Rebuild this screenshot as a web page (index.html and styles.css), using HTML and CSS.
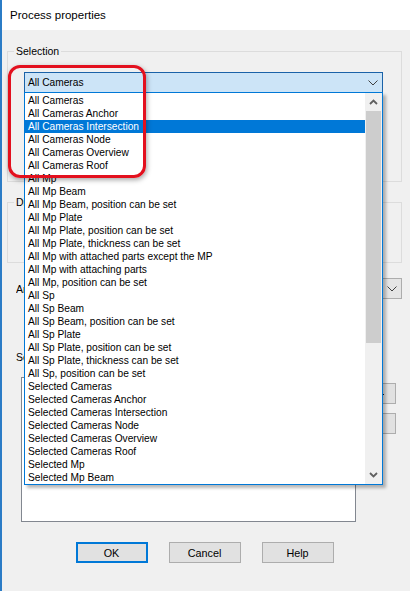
FILE: index.html
```html
<!DOCTYPE html>
<html lang="en">
<head>
    <meta charset="UTF-8">
    <meta name="viewport" content="width=device-width, initial-scale=1.0">
    <title>Process properties</title>
    <link rel="stylesheet" href="styles.css">
</head>
<body>
    <div class="window">
        <div class="titlebar">Process properties</div>

        <div class="content">
            <div class="group group-selection">
                <span class="group-label">Selection</span>
                <div class="combo combo-open">
                    <span>All Cameras</span>
                    <svg class="chevron" width="10" height="6" viewBox="0 0 10 6"><polyline points="0.5,0.5 5,5 9.5,0.5" fill="none" stroke="#404040" stroke-width="1"/></svg>
                </div>
            </div>

            <div class="group group-display">
                <span class="group-label clipped-group">Display</span>
            </div>

            <div class="row row-area">
                <span class="label clipped">Area</span>
                <div class="combo combo-grey">
                    <svg class="chevron" width="10" height="6" viewBox="0 0 10 6"><polyline points="0.5,0.5 5,5 9.5,0.5" fill="none" stroke="#404040" stroke-width="1"/></svg>
                </div>
            </div>

            <div class="label label-selected clipped">Selected objects</div>
            <div class="row row-objects">
                <div class="listbox"></div>
                <div class="side-buttons">
                    <button class="side-button"><span class="dash"></span></button>
                    <button class="side-button"></button>
                </div>
            </div>

            <div class="dialog-buttons">
                <button class="btn btn-default">OK</button>
                <button class="btn">Cancel</button>
                <button class="btn">Help</button>
            </div>
        </div>

        <!-- open dropdown of the selection combo -->
        <div class="dropdown">
            <ul class="items">
                <li>All Cameras</li>
                <li>All Cameras Anchor</li>
                <li class="selected">All Cameras Intersection</li>
                <li>All Cameras Node</li>
                <li>All Cameras Overview</li>
                <li>All Cameras Roof</li>
                <li>All Mp</li>
                <li>All Mp Beam</li>
                <li>All Mp Beam, position can be set</li>
                <li>All Mp Plate</li>
                <li>All Mp Plate, position can be set</li>
                <li>All Mp Plate, thickness can be set</li>
                <li>All Mp with attached parts except the MP</li>
                <li>All Mp with attaching parts</li>
                <li>All Mp, position can be set</li>
                <li>All Sp</li>
                <li>All Sp Beam</li>
                <li>All Sp Beam, position can be set</li>
                <li>All Sp Plate</li>
                <li>All Sp Plate, position can be set</li>
                <li>All Sp Plate, thickness can be set</li>
                <li>All Sp, position can be set</li>
                <li>Selected Cameras</li>
                <li>Selected Cameras Anchor</li>
                <li>Selected Cameras Intersection</li>
                <li>Selected Cameras Node</li>
                <li>Selected Cameras Overview</li>
                <li>Selected Cameras Roof</li>
                <li>Selected Mp</li>
                <li>Selected Mp Beam</li>
            </ul>
            <div class="scrollbar">
                <div class="scroll-arrow">
                    <svg width="9" height="6" viewBox="0 0 9 6"><polyline points="1,5 4.5,1.5 8,5" fill="none" stroke="#606060" stroke-width="1.8"/></svg>
                </div>
                <div class="scroll-thumb"></div>
                <div class="scroll-track"></div>
                <div class="scroll-arrow">
                    <svg width="9" height="6" viewBox="0 0 9 6"><polyline points="1,1 4.5,4.5 8,1" fill="none" stroke="#606060" stroke-width="1.8"/></svg>
                </div>
            </div>
        </div>

        <!-- red marker drawn on the screenshot -->
        <div class="marker"></div>
    </div>
</body>
</html>
```

FILE: styles.css
```css
body {
    margin: 0;
    font-family: "Liberation Sans", Arial, sans-serif;
    color: #000;
}
.window {
    position: relative;
    width: 410px;
    height: 591px;
    box-sizing: border-box;
    border-left: 2px solid #2b7cc6;
    background-color: #f0f0f0;
    overflow: hidden;
}
.titlebar {
    height: 30px;
    line-height: 31px;
    padding-left: 8px;
    background-color: #fff;
    font-size: 11.5px;
}
.content {
    padding: 0 8px 0 5px;
}
.group {
    position: relative;
    box-sizing: border-box;
    border: 1px solid #dcdcdc;
}
.group-label {
    position: absolute;
    top: -8px;
    left: 6px;
    padding: 0 2px;
    background-color: #f0f0f0;
    font-size: 10.5px;
    line-height: 14px;
}
/* labels half hidden under the open dropdown */
.clipped-group {
    width: 9px;
    overflow: hidden;
    white-space: nowrap;
}
.clipped {
    width: 8px;
    overflow: hidden;
    white-space: nowrap;
}
.group-selection {
    margin-top: 21px;
    height: 131px;
    padding: 20px 18px 0 16px;
}
.group-display {
    margin-top: 20px;
    height: 61px;
}
.combo {
    box-sizing: border-box;
    height: 21px;
    display: flex;
    align-items: center;
    justify-content: space-between;
    font-size: 10.2px;
}
.combo-open {
    border: 1px solid #1a62a8;
    background-color: #cce4f7;
    padding: 0 4px 0 3px;
}
.combo-grey {
    width: 60px;
    border: 1px solid #adadad;
    background-color: #e5e5e5;
    justify-content: flex-end;
    padding-right: 4px;
}
.chevron {
    display: block;
}
.row {
    display: flex;
}
.row-area {
    margin-top: 15px;
    align-items: center;
}
.label {
    font-size: 10.5px;
    line-height: 14px;
    margin-left: 9px;
}
.row-area .combo {
    margin-left: auto;
}
.label-selected {
    margin-top: 51px;
}
.row-objects {
    margin-top: 13px;
}
.listbox {
    box-sizing: border-box;
    width: 339px;
    height: 145px;
    margin-left: 14px;
    border: 1px solid #828790;
    background-color: #fff;
}
.side-buttons {
    margin-left: auto;
    margin-right: 6px;
    padding-top: 6px;
    display: flex;
    flex-direction: column;
    gap: 9px;
}
.side-button {
    position: relative;
    box-sizing: border-box;
    width: 40px;
    height: 21px;
    padding: 0;
    border: 1px solid #adadad;
    background-color: #e1e1e1;
}
.dash {
    position: absolute;
    left: 24px;
    top: 10px;
    width: 3px;
    height: 1px;
    background-color: #202020;
}
.dialog-buttons {
    margin-top: 20px;
    display: flex;
    justify-content: center;
    gap: 21px;
}
.btn {
    box-sizing: border-box;
    width: 72px;
    height: 21px;
    padding: 0;
    border: 1px solid #adadad;
    background-color: #e1e1e1;
    font-family: "Liberation Sans", Arial, sans-serif;
    font-size: 10.8px;
    color: #000;
}
.btn-default {
    border: 2px solid #0078d7;
}
.dropdown {
    position: absolute;
    left: 22px;
    top: 92px;
    width: 359px;
    height: 393px;
    box-sizing: border-box;
    border: 1px solid #0078d7;
    background-color: #fff;
    display: flex;
    box-shadow: 3px 3px 3px rgba(0, 0, 0, 0.28);
}
.items {
    flex: 1;
    margin: 0;
    padding: 1px 0 0 0;
    list-style: none;
    font-size: 10.2px;
    line-height: 13px;
}
.items li {
    height: 13px;
    padding-left: 3px;
    white-space: nowrap;
}
.items li.selected {
    background-color: #0078d7;
    color: #fff;
}
.scrollbar {
    width: 17px;
    display: flex;
    flex-direction: column;
    background-color: #f0f0f0;
}
.scroll-arrow {
    height: 18px;
    display: flex;
    align-items: center;
    justify-content: center;
}
.scroll-thumb {
    height: 232px;
    margin: 0 1px;
    background-color: #cdcdcd;
}
.scroll-track {
    flex: 1;
}
.marker {
    position: absolute;
    left: 6px;
    top: 65px;
    width: 138px;
    height: 113px;
    box-sizing: border-box;
    border: 3px solid #e3101e;
    border-radius: 12px;
    box-shadow: 1px 2px 5px rgba(0, 0, 0, 0.35);
}
```
